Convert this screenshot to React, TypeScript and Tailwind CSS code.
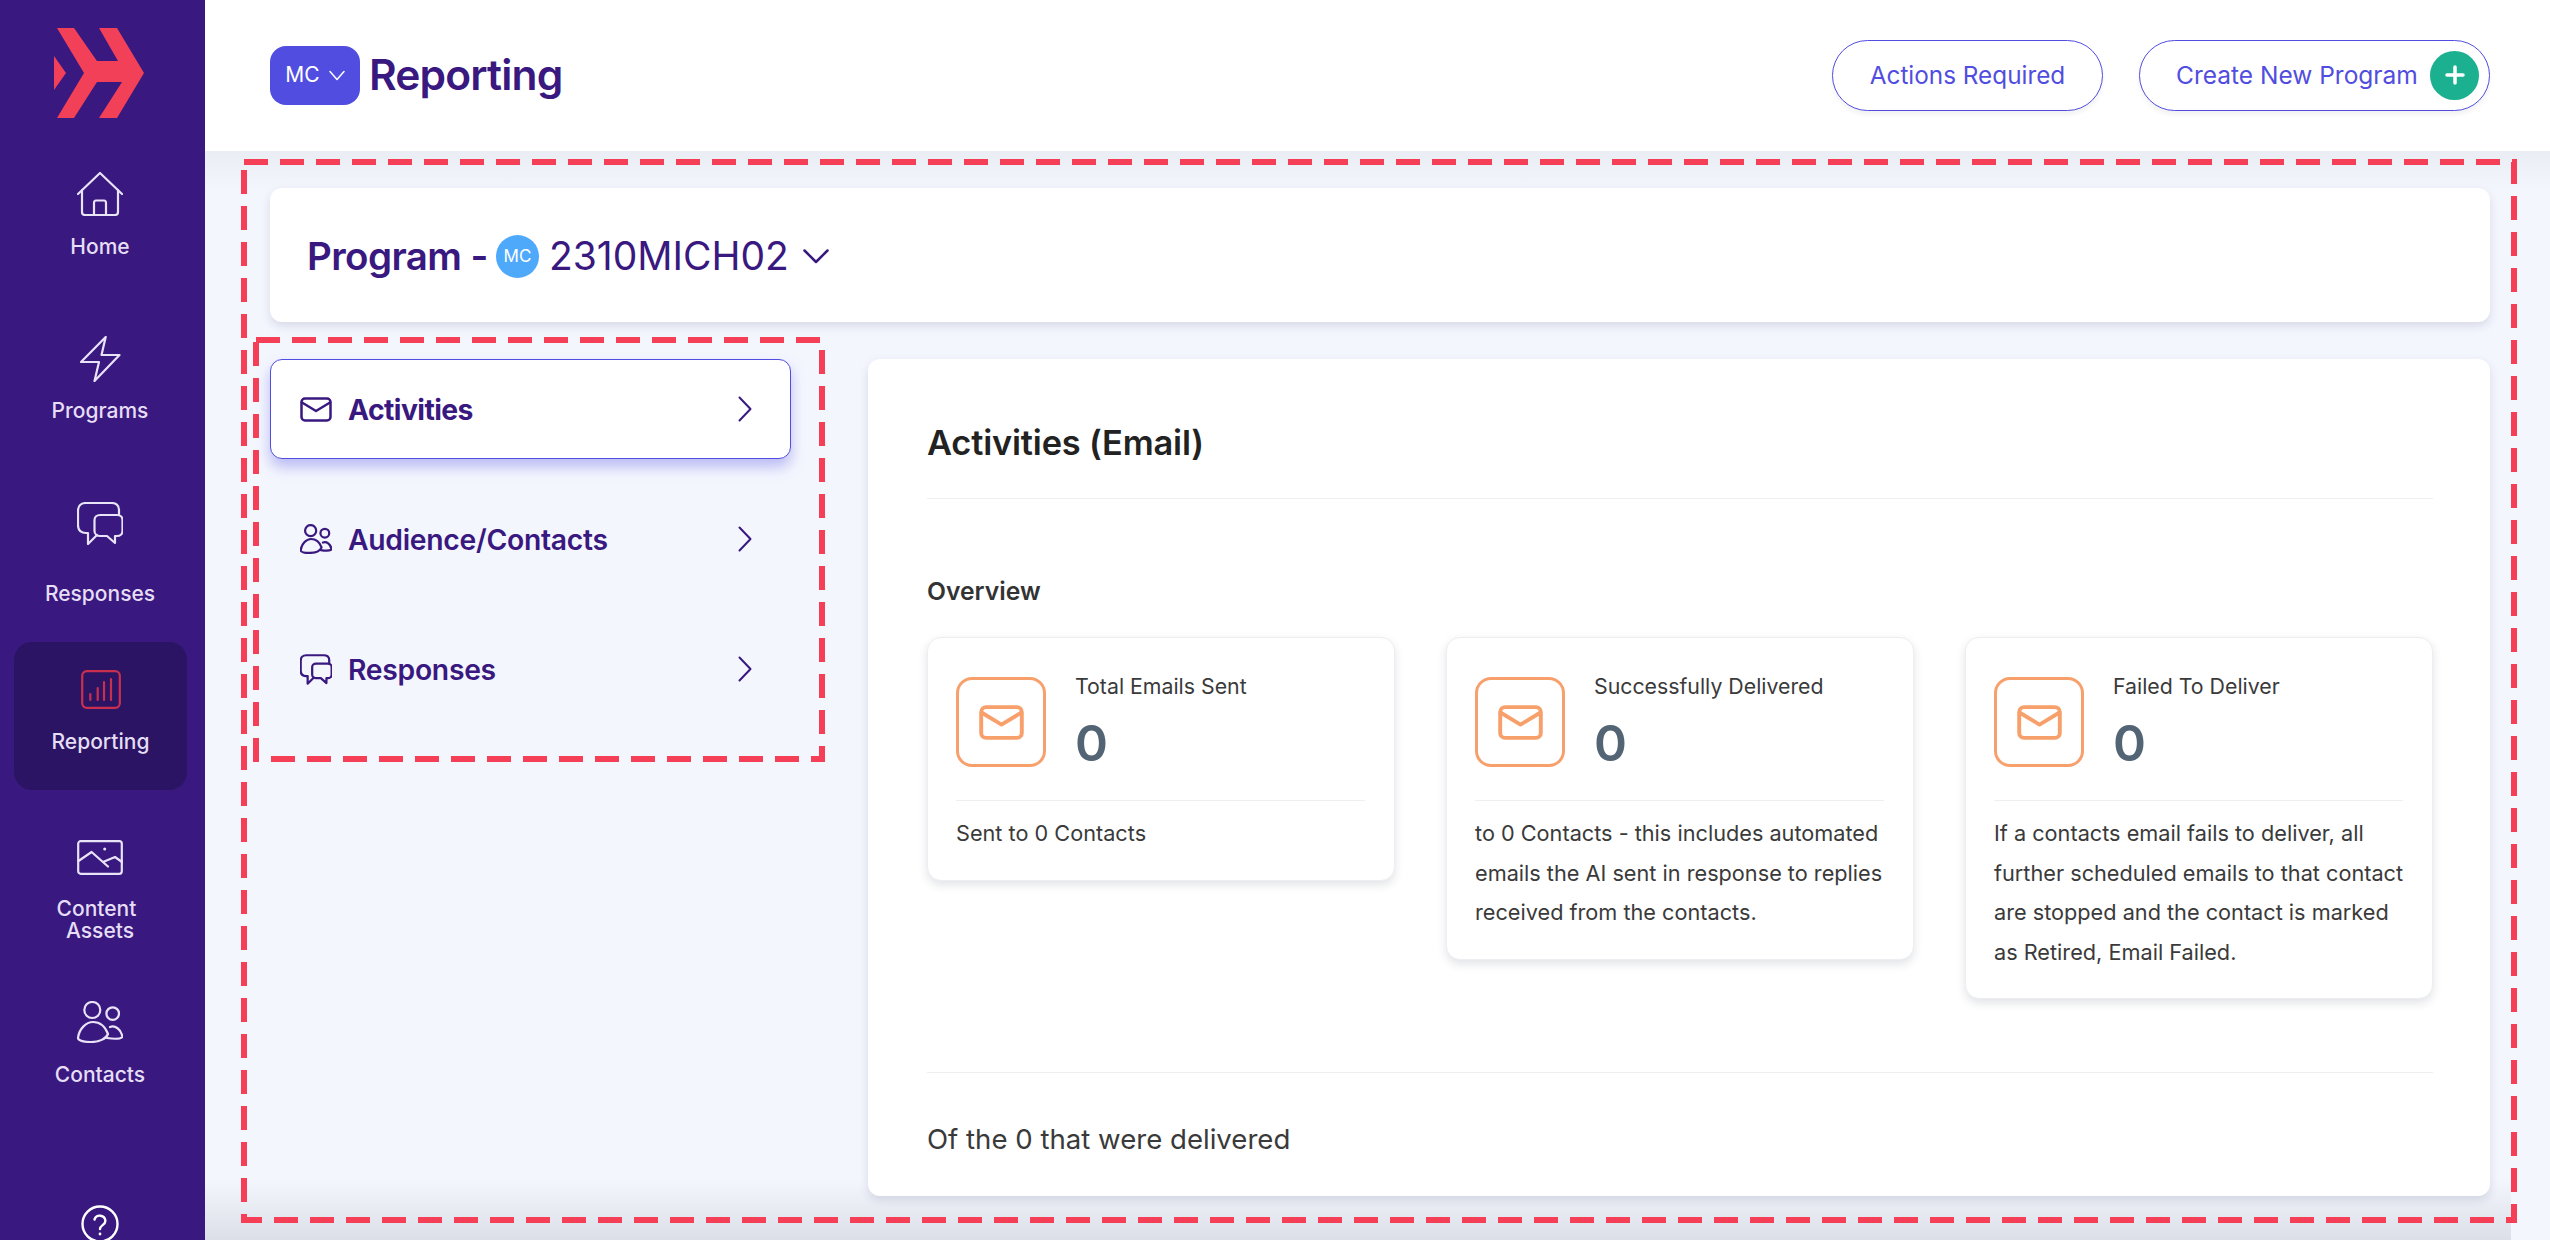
import React from "react";

function Logo() {
  return (
    <svg viewBox="0 0 91 90" className="h-[90px] w-[91px]" fill="#f24058">
      <polygon points="0,28 12,45 0,62" />
      <polygon points="3,0 20,0 43,33 64,33 45,0 63,0 90,45 63,90 45,90 68,54 43,54 20,90 3,90 30,45" />
    </svg>
  );
}

function HomeIcon() {
  return (
    <svg viewBox="0 0 46 44" className="h-[44px] w-[46px]" fill="none" stroke="currentColor" strokeWidth="2.2" strokeLinecap="round" strokeLinejoin="round">
      <path d="M1 22 23 1l22 21" />
      <path d="M5 18v22c0 2 1 3 3 3h30c2 0 3-1 3-3V18" />
      <path d="M17 43V31c0-1.500.8-2.500 2-2.500h8c1.200 0 2 1 2 2.500v12" />
    </svg>
  );
}

function BoltIcon() {
  return (
    <svg viewBox="0 0 41 46" className="h-[46px] w-[41px]" fill="none" stroke="currentColor" strokeWidth="2.2" strokeLinecap="round" strokeLinejoin="round">
      <path d="M25.700 1 1 26h18l-4.500 19 25-26h-18z" />
    </svg>
  );
}

function ChatIcon({ className, strokeWidth = 2.2 }: { className: string; strokeWidth?: number }) {
  return (
    <svg viewBox="0 0 46 43" className={className} fill="none" stroke="currentColor" strokeWidth={strokeWidth} strokeLinecap="round" strokeLinejoin="round">
      <path d="M42 13V8c0-5-3-7-8-7H9C4 1 1 4 1 9v14c0 5 3 8 8 8h2v11l9-9" />
      <path d="M23 13h17c3 0 5.500 2 5.500 5v11c0 3-2.500 5-5.500 5h-2v7l-8-7h-7c-3 0-5.500-2-5.500-5V18c0-3 2.500-5 5.500-5z" />
    </svg>
  );
}

function ReportIcon() {
  return (
    <svg viewBox="0 0 40 39" className="h-[39px] w-[40px]" fill="none" stroke="#c9304f" strokeWidth="2.200" strokeLinecap="round" strokeLinejoin="round">
      <rect x="1.200" y="1.200" width="37.600" height="36.600" rx="4.500" />
      <path d="M9.300 30v-6M16.700 30V18M23 30V12M30 30V9" />
    </svg>
  );
}

function ImageIcon() {
  return (
    <svg viewBox="0 0 46 35" className="h-[35px] w-[46px]" fill="none" stroke="currentColor" strokeWidth="2.200" strokeLinecap="round" strokeLinejoin="round">
      <rect x="1.200" y="1.200" width="43.600" height="32.600" rx="2.500" />
      <path d="M1.500 21 14.600 12 31 26.500M26 22l12-5 7 5" />
      <circle cx="27.700" cy="9" r="1.500" fill="currentColor" stroke="none" />
    </svg>
  );
}

function PeopleIcon({ className, strokeWidth = 2.2 }: { className: string; strokeWidth?: number }) {
  return (
    <svg viewBox="0 0 46 42" className={className} fill="none" stroke="currentColor" strokeWidth={strokeWidth} strokeLinecap="round" strokeLinejoin="round">
      <circle cx="15.300" cy="9" r="8" />
      <circle cx="35.700" cy="12.600" r="6.300" />
      <path d="M1 37c1-9 8-16 15-16s12 4 15 12c-2 5-9 8-17 8-6 0-13-1-13-4z" />
      <path d="M33 26c5-2 11 2 12.500 10-2.500 2-9.500 2-15.500 1" />
    </svg>
  );
}

function HelpIcon() {
  return (
    <svg viewBox="0 0 38 38" className="h-[38px] w-[38px]" fill="none" stroke="white" strokeWidth="2.400" strokeLinecap="round" strokeLinejoin="round">
      <circle cx="19" cy="19" r="17.500" />
      <path d="M13.500 14.500a5.600 5.600 0 0 1 10.900 1.500c0 3.800-5.400 4.500-5.400 8" />
      <circle cx="19" cy="29" r="1.400" fill="white" stroke="none" />
    </svg>
  );
}

function MailIcon({ className, strokeWidth = 2.5 }: { className: string; strokeWidth?: number }) {
  return (
    <svg viewBox="0 0 32 25" className={className} fill="none" stroke="currentColor" strokeWidth={strokeWidth} strokeLinecap="round" strokeLinejoin="round">
      <rect x="1.500" y="1.500" width="29" height="22" rx="3.500" />
      <path d="M2 5.500 16 14 30 5.500" />
    </svg>
  );
}

function ChevronRight() {
  return (
    <svg viewBox="0 0 14 26" className="h-[26px] w-[14px]" fill="none" stroke="#39187f" strokeWidth="2" strokeLinecap="round" strokeLinejoin="round">
      <path d="M1.500 1.500 12.500 13 1.500 24.500" />
    </svg>
  );
}

function NavItem({
  icon,
  label,
  className,
}: {
  icon: React.ReactNode;
  label: React.ReactNode;
  className: string;
}) {
  return (
    <div className={`flex w-full shrink-0 flex-col items-center text-center text-[21px] font-medium text-[#e5def5] ${className}`}>
      <div className="flex h-[48px] items-center justify-center text-[#e9e3f7]">{icon}</div>
      {label}
    </div>
  );
}

function Sidebar() {
  return (
    <aside className="flex h-full w-[205px] shrink-0 flex-col overflow-hidden bg-[#39187f] pr-[5px]">
      <div className="h-[170px] shrink-0 pt-[28px] pl-[54px]">
        <Logo />
      </div>
      <NavItem icon={<HomeIcon />} label={<span className="mt-[16px] leading-[26px]">Home</span>} className="" />
      <NavItem icon={<BoltIcon />} label={<span className="mt-[15px] leading-[26px]">Programs</span>} className="mt-[75px]" />
      <NavItem icon={<ChatIcon className="h-[43px] w-[46px]" />} label={<span className="mt-[34px] leading-[26px]">Responses</span>} className="mt-[75px]" />
      <div className="mt-[35px] ml-[14px] h-[148px] w-[173px] shrink-0 rounded-[18px] bg-[#2a1463] pt-[23px]">
        <NavItem icon={<ReportIcon />} label={<span className="mt-[16px] leading-[26px]">Reporting</span>} className="" />
      </div>
      <NavItem
        icon={<ImageIcon />}
        label={
          <span className="mt-[17px] leading-[21.500px]">
            <span className="mr-[7px]">Content</span>
            <br />
            Assets
          </span>
        }
        className="mt-[43px]"
      />
      <NavItem icon={<PeopleIcon className="h-[42px] w-[46px]" />} label={<span className="mt-[16px] leading-[26px]">Contacts</span>} className="mt-[57px]" />
      <div className="mt-[117px] flex shrink-0 justify-center">
        <HelpIcon />
      </div>
    </aside>
  );
}

function Header() {
  return (
    <header className="relative z-10 flex h-[151px] shrink-0 items-center justify-between bg-white pr-[61px] pl-[65px]">
      <div className="-mt-[1px] flex items-center gap-[9px]">
        <div className="flex h-[59px] w-[90px] items-center justify-center gap-[9px] rounded-[16px] bg-[#514de0] text-[21px] text-white">
          MC
          <svg viewBox="0 0 16 11" className="h-[11px] w-[16px]" fill="none" stroke="white" strokeWidth="1.500" strokeLinecap="round" strokeLinejoin="round">
            <path d="M1 1.500 8 9.500l7-8" />
          </svg>
        </div>
        <h1 className="text-[42.500px] leading-[50px] font-semibold tracking-[-0.02em] text-[#39187f]">Reporting</h1>
      </div>
      <div className="-mt-[1px] flex items-center gap-[36px]">
        <button className="flex h-[71px] w-[271px] items-center justify-center rounded-full border-[1.5px] border-[#514de0] bg-white text-[24.300px] text-[#514de0] shadow-[0_4px_4px_rgba(0,0,0,0.05)]">
          Actions Required
        </button>
        <button className="flex h-[71px] w-[351px] items-center justify-between rounded-full border-[1.5px] border-[#514de0] bg-white pr-[10px] pl-[36px] text-[24.500px] text-[#514de0] shadow-[0_4px_4px_rgba(0,0,0,0.05)]">
          Create New Program
          <span className="flex h-[49px] w-[49px] items-center justify-center rounded-full bg-[#1bb08f]">
            <svg viewBox="0 0 20 20" className="h-[20px] w-[20px]" stroke="white" strokeWidth="3.500" strokeLinecap="round">
              <path d="M10 2v16M2 10h16" />
            </svg>
          </span>
        </button>
      </div>
    </header>
  );
}

function ProgramCard() {
  return (
    <div className="flex h-[134px] items-center rounded-[12px] bg-white pt-[3px] pl-[37px] shadow-[0_4px_10px_rgba(40,50,90,0.14)]">
      <span className="text-[38.500px] font-semibold tracking-[-0.015em] text-[#39187f]">Program -</span>
      <span className="mr-[10px] ml-[8px] flex h-[43px] w-[43px] items-center justify-center rounded-full bg-[#4fa9fb] text-[17px] text-white">MC</span>
      <span className="text-[39px] text-[#39187f]">2310MICH02</span>
      <svg viewBox="0 0 26 15" className="ml-[14px] h-[15px] w-[26px]" fill="none" stroke="#39187f" strokeWidth="2.500" strokeLinecap="round" strokeLinejoin="round">
        <path d="M1.500 1.500 13 13 24.500 1.500" />
      </svg>
    </div>
  );
}

const sideItems = [
  { label: "Activities", icon: <MailIcon className="h-[25px] w-[32px]" />, active: true },
  { label: "Audience/Contacts", icon: <PeopleIcon className="h-[30px] w-[32px]" strokeWidth={3.2} />, active: false },
  { label: "Responses", icon: <ChatIcon className="h-[31px] w-[32px]" strokeWidth={3.2} />, active: false },
];

function SideMenu() {
  return (
    <div className="flex w-[521px] shrink-0 flex-col gap-[30px]">
      {sideItems.map((item) => (
        <div
          key={item.label}
          className={
            item.active
              ? "flex h-[100px] items-center rounded-[12px] border-[1.5px] border-[#514de0] bg-white pr-[38px] pl-[29px] text-[#39187f] shadow-[0_8px_14px_rgba(81,77,224,0.35)]"
              : "flex h-[100px] items-center rounded-[12px] border-[1.5px] border-transparent pr-[38px] pl-[29px] text-[#39187f]"
          }
        >
          {item.icon}
          <span
            className={
              item.active
                ? "ml-[16px] flex-1 pt-[2px] text-[28.300px] font-bold tracking-[-0.02em]"
                : "ml-[16px] flex-1 pt-[2px] text-[28.300px] font-semibold tracking-[-0.01em]"
            }
          >
            {item.label}
          </span>
          <ChevronRight />
        </div>
      ))}
    </div>
  );
}

const stats = [
  {
    title: "Total Emails Sent",
    lines: ["Sent to 0 Contacts"],
  },
  {
    title: "Successfully Delivered",
    lines: [
      "to 0 Contacts - this includes automated",
      "emails the AI sent in response to replies",
      "received from the contacts.",
    ],
  },
  {
    title: "Failed To Deliver",
    lines: [
      "If a contacts email fails to deliver, all",
      "further scheduled emails to that contact",
      "are stopped and the contact is marked",
      "as Retired, Email Failed.",
    ],
  },
];

function StatCard({ title, lines }: { title: string; lines: string[] }) {
  return (
    <div className="w-[468px] rounded-[14px] border border-[#eceef2] bg-white pt-[39px] pr-[29px] pb-[26px] pl-[28px] shadow-[0_4px_10px_rgba(30,40,70,0.13)]">
      <div className="flex h-[124px] border-b border-[#eeeff1]">
        <div className="flex h-[90px] w-[90px] items-center justify-center rounded-[16px] border-[3px] border-[#f8a06b] text-[#f8a06b]">
          <MailIcon className="h-[35px] w-[45px]" strokeWidth={2.8} />
        </div>
        <div className="-mt-[4px] ml-[29px]">
          <div className="text-[21.300px] leading-[26px] text-[#3a3a3a]">{title}</div>
          <div className="mt-[16px] text-[50px] leading-[56px] font-semibold text-[#536475]">0</div>
        </div>
      </div>
      <div className="pt-[13px] text-[21.700px] leading-[39.5px] whitespace-nowrap text-[#3a3a3a]">
        {lines.map((line) => (
          <div key={line}>{line}</div>
        ))}
      </div>
    </div>
  );
}

function ActivitiesCard() {
  return (
    <div className="h-[837px] flex-1 rounded-[12px] bg-white pr-[57px] pl-[59px] shadow-[0_4px_10px_rgba(40,50,90,0.14)]">
      <div className="border-b border-[#eeeff1] pt-[64px] pb-[35px]">
        <h2 className="text-[34.400px] leading-[40px] font-semibold tracking-[-0.005em] text-[#222222]">Activities (Email)</h2>
      </div>
      <h3 className="mt-[77px] text-[24.700px] leading-[30px] font-semibold text-[#333333]">Overview</h3>
      <div className="mt-[31px] flex h-[362px] items-start gap-[51px]">
        {stats.map((s) => (
          <StatCard key={s.title} title={s.title} lines={s.lines} />
        ))}
      </div>
      <div className="mt-[73px] border-t border-[#eeeff1] pt-[46px] text-[27.600px] leading-[40px] text-[#3a3a3a]">
        Of the 0 that were delivered
      </div>
    </div>
  );
}

export default function App() {
  return (
    <div className="relative flex h-[1240px] w-[2550px] overflow-hidden bg-[#f4f6fe] font-['Inter',sans-serif]">
      <Sidebar />
      <div className="relative flex flex-1 flex-col">
        <Header />
        <div className="pointer-events-none absolute top-[151px] right-0 left-0 h-[40px] bg-gradient-to-b from-[#ebedf5] to-transparent" />
        <div className="pointer-events-none absolute right-[40px] bottom-0 left-0 h-[60px] bg-gradient-to-t from-[#dcdfe7] to-transparent" />
        <main className="relative flex-1 pt-[37px] pr-[61px] pl-[65px]">
          <ProgramCard />
          <div className="mt-[37px] flex gap-[77px]">
            <SideMenu />
            <ActivitiesCard />
          </div>
        </main>
      </div>
      {/* red annotation boxes drawn over the page */}
      <svg className="pointer-events-none absolute inset-0 h-[1240px] w-[2550px]" viewBox="0 0 2550 1240" fill="none" stroke="#f43f56" strokeWidth="6" strokeDasharray="24 12">
        <rect x="244" y="162" width="2270" height="1058" />
        <rect x="256" y="340" width="566" height="419" />
      </svg>
    </div>
  );
}
